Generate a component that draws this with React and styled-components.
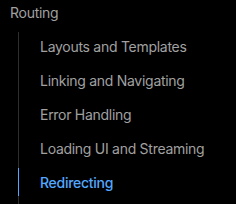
import styled, { createGlobalStyle } from "styled-components";

const GlobalStyle = createGlobalStyle`
  body {
    margin: 0;
    background: #000;
    font-family: Inter, "Noto Sans", sans-serif;
    letter-spacing: -0.28px;
  }
`;

const Section = styled.nav`
  display: flex;
  flex-direction: column;
  gap: 8px;
  padding-left: 10px;
  height: 204px;
  overflow: hidden;
`;

const Heading = styled.div`
  height: 24px;
  display: flex;
  align-items: center;
  font-size: 14px;
  color: #a1a1a1;
`;

const List = styled.ul`
  list-style: none;
  margin: 0 0 0 8px;
  padding: 0;
  border-left: 1px solid #2e2e2e;
  display: flex;
  flex-direction: column;
  gap: 6px;
  flex: 1;
`;

const Item = styled.li`
  position: relative;
  height: 28px;
  display: flex;
  align-items: center;
  padding-left: 21px;
  font-size: 14px;
  color: ${(p) => (p.$active ? "#52a8ff" : "#a1a1a1")};
  font-weight: ${(p) => (p.$active ? 500 : 400)};
  white-space: nowrap;

  &::before {
    content: "";
    position: absolute;
    left: -1px;
    top: 0;
    bottom: 0;
    width: 1px;
    background: ${(p) => (p.$active ? "#52a8ff" : "transparent")};
  }
`;

const items = [
  "Layouts and Templates",
  "Linking and Navigating",
  "Error Handling",
  "Loading UI and Streaming",
  "Redirecting",
];

export default function App() {
  return (
    <>
      <GlobalStyle />
      <Section>
        <Heading>Routing</Heading>
        <List>
          {items.map((name) => (
            <Item key={name} $active={name === "Redirecting"}>
              {name}
            </Item>
          ))}
        </List>
      </Section>
    </>
  );
}
